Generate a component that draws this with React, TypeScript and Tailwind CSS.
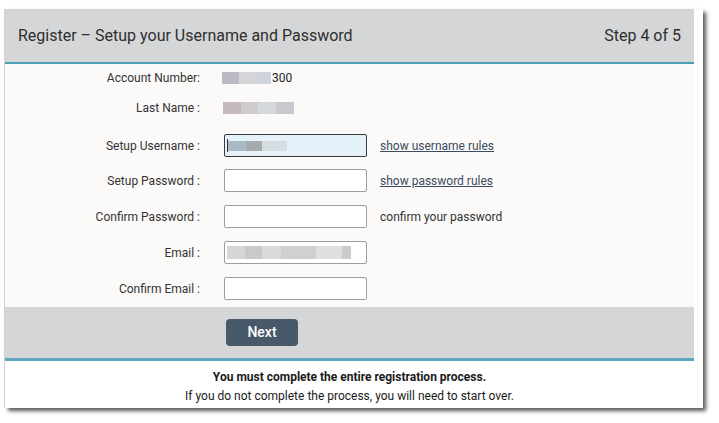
import React from 'react';

const font = { fontFamily: 'Roboto, "Liberation Sans", sans-serif' };

const Blur: React.FC<{ blocks: [number, string][]; className?: string }> = ({ blocks, className = 'h-[12px]' }) => (
  <div className={`flex ${className}`}>
    {blocks.map(([w, c], i) => (
      <div key={i} style={{ width: w, background: c }} className="h-full" />
    ))}
  </div>
);

const Input: React.FC<{ focused?: boolean; children?: React.ReactNode }> = ({ focused, children }) => (
  <div
    className={`w-[143px] h-[23px] rounded-[2px] border flex items-center pl-[2px] ${
      focused ? 'border-[#3a3a3a] bg-[#e4f1f8]' : 'border-[#9d9d9d] bg-white'
    }`}
  >
    {children}
  </div>
);

const Row: React.FC<{ label: string; className?: string; children?: React.ReactNode; side?: React.ReactNode }> = ({
  label,
  className = '',
  children,
  side,
}) => (
  <div className={`flex items-center ${className}`}>
    <div className="w-[195px] text-right text-[12px] text-[#333]">{label}</div>
    <div className="ml-[24px] w-[143px]">{children}</div>
    {side && <div className="ml-[13px] text-[12px]">{side}</div>}
  </div>
);

export default function App() {
  return (
    <div className="w-[719px] h-[423px] bg-white pt-[9px] pl-[5px]" style={font}>
      <div className="w-[698px] h-[399px] bg-white shadow-[3px_3px_4px_rgba(0,0,0,0.65),-1px_0_0_#d8d8d8]">
        <div className="w-[689px]">
          {/* Header */}
          <div className="h-[53px] bg-[#d5d6d8] flex items-center justify-between pl-[13px] pr-[13px] text-[16px] text-[#2f2f2f]">
            <span>Register – Setup your Username and Password</span>
            <span>Step 4 of 5</span>
          </div>
          <div className="h-[2px] bg-[#4e9db6]" />

          {/* Body */}
          <div className="bg-[#fbfaf9] pt-[2px] pb-[7px]">
            <Row label="Account Number:" className="h-[24px]">
              <div className="flex items-center -ml-[2px]">
                <Blur blocks={[[17, '#b9bac3'], [16, '#d5d5d7'], [16, '#d0d4da']]} />
                <span className="ml-[1px] text-[12px] text-[#222]">300</span>
              </div>
            </Row>
            <Row label="Last Name :" className="h-[24px] mt-[6px]">
              <div className="-ml-[1px]">
                <Blur blocks={[[18, '#c4b9bc'], [17, '#d1cbce'], [18, '#d4d7db'], [18, '#cacace']]} />
              </div>
            </Row>
            <Row
              label="Setup Username :"
              className="h-[23px] mt-[14px]"
              side={<span className="text-[#3b4c60] underline">show username rules</span>}
            >
              <Input focused>
                <div className="w-px h-[13px] bg-[#333]" />
                <Blur blocks={[[18, '#a9bac7'], [16, '#a8abad'], [25, '#d6dde1']]} className="h-[10px]" />
              </Input>
            </Row>
            <Row
              label="Setup Password :"
              className="h-[23px] mt-[12px]"
              side={<span className="text-[#3b4c60] underline">show password rules</span>}
            >
              <Input />
            </Row>
            <Row
              label="Confirm Password :"
              className="h-[23px] mt-[13px]"
              side={<span className="text-[#333]">confirm your password</span>}
            >
              <Input />
            </Row>
            <Row label="Email :" className="h-[23px] mt-[13px]">
              <Input>
                <Blur
                  blocks={[[18, '#d6d6d6'], [17, '#c9c9c9'], [19, '#dadada'], [35, '#d0d0d0'], [26, '#dfdfdf'], [9, '#cbcbcb']]}
                  className="h-[13px]"
                />
              </Input>
            </Row>
            <Row label="Confirm Email :" className="h-[23px] mt-[13px]">
              <Input />
            </Row>
          </div>

          {/* Footer */}
          <div className="h-[51px] bg-[#d5d6d8] pt-[12px] pl-[221px]">
            <button className="w-[72px] h-[27px] rounded-[4px] bg-[#48596a] text-white text-[14px] font-medium">
              Next
            </button>
          </div>
          <div className="h-[3px] bg-[#5fa5bd]" />

          <div className="pt-[7px] text-center text-[12px] leading-[18px] text-[#1a1a1a]">
            <p className="font-bold">You must complete the entire registration process.</p>
            <p className="mt-px">If you do not complete the process, you will need to start over.</p>
          </div>
        </div>
      </div>
    </div>
  );
}
